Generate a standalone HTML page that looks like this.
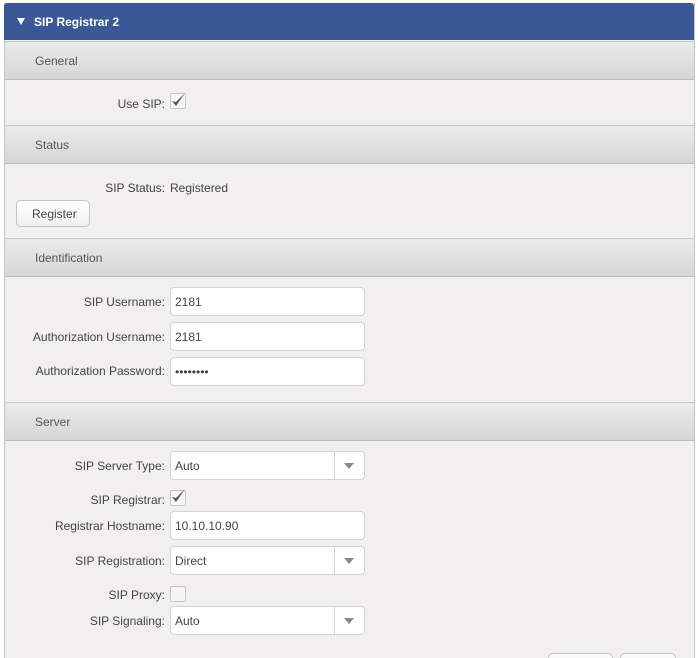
<!DOCTYPE html>
<html><head><style>
html,body{margin:0;}
body{background:#fff;font-family:"Liberation Sans",sans-serif;font-size:12px;color:#444;}
#w{position:relative;width:698px;height:658px;overflow:hidden;}
#p{position:absolute;left:4px;top:3px;width:689px;height:655px;background:#f1efef;border-left:1px solid #c4c4c4;border-right:1px solid #c4c4c4;}
.hd{position:absolute;left:4px;top:3px;width:690px;height:37px;background:#3b5896;color:#fff;font-weight:bold;font-size:12px;border-radius:3px 3px 0 0;}
.bar{position:absolute;left:5px;width:689px;height:37px;background:linear-gradient(#ebebeb,#d6d6d6);border-top:1px solid #c8c8c8;border-bottom:1px solid #bcbcbc;color:#555;font-size:12px;}
.bar span{position:absolute;left:30px;top:12px;}
.l{position:absolute;right:533px;text-align:right;white-space:nowrap;}
.in{position:absolute;left:170px;width:193px;height:27px;background:#fff;border:1px solid #d3d3d3;border-radius:4px;}
.in span{position:absolute;left:4px;top:7px;color:#444;}
.dd{position:absolute;right:0;top:0;width:29px;height:27px;border-left:1px solid #d3d3d3;}
.dd:after{content:"";position:absolute;left:9px;top:11px;border-left:5px solid transparent;border-right:5px solid transparent;border-top:6px solid #888;}
.cb{position:absolute;left:170px;width:14px;height:14px;border:1px solid #c6c6c6;border-radius:2px;background:#f5f5f5;}
.btn{position:absolute;border:1px solid #c4c4c4;border-radius:5px;background:linear-gradient(#fff,#f0f0f0);}
.bb{position:absolute;top:653px;height:5px;border:1px solid #c4c4c4;border-bottom:none;border-radius:5px 5px 0 0;background:#fafafa;}
</style></head><body><div id="w">
<div id="p"></div>
<div class="hd"><span style="position:absolute;left:13px;top:15px;border-left:4px solid transparent;border-right:4px solid transparent;border-top:7px solid #fff;"></span><span style="position:absolute;left:30px;top:12px;">SIP Registrar 2</span></div>
<div class="bar" style="top:41px"><span>General</span></div>
<div class="l" style="top:97px">Use SIP:</div>
<div class="cb" style="top:93px"></div><svg style="position:absolute;left:170px;top:92px" width="17" height="17"><path d="M2 9 L6 14 L15 1 L6 10 Z" fill="#555"/></svg>
<div class="bar" style="top:125px"><span>Status</span></div>
<div class="l" style="top:181px">SIP Status:</div>
<div style="position:absolute;left:170px;top:181px">Registered</div>
<div class="btn" style="left:16px;top:200px;width:72px;height:25px"><span style="position:absolute;left:15px;top:6px">Register</span></div>
<div class="bar" style="top:238px"><span>Identification</span></div>
<div class="l" style="top:295px">SIP Username:</div><div class="in" style="top:287px"><span>2181</span></div>
<div class="l" style="top:330px">Authorization Username:</div><div class="in" style="top:322px"><span>2181</span></div>
<div class="l" style="top:364px">Authorization Password:</div><div class="in" style="top:357px"><span>&bull;&bull;&bull;&bull;&bull;&bull;&bull;&bull;</span></div>
<div class="bar" style="top:402px"><span>Server</span></div>
<div class="l" style="top:459px">SIP Server Type:</div><div class="in" style="top:451px"><span>Auto</span><div class="dd"></div></div>
<div class="l" style="top:493px">SIP Registrar:</div>
<div class="cb" style="top:490px"></div><svg style="position:absolute;left:170px;top:488px" width="17" height="17"><path d="M2 9 L6 14 L15 1 L6 10 Z" fill="#555"/></svg>
<div class="l" style="top:519px">Registrar Hostname:</div><div class="in" style="top:511px"><span>10.10.10.90</span></div>
<div class="l" style="top:554px">SIP Registration:</div><div class="in" style="top:546px"><span>Direct</span><div class="dd"></div></div>
<div class="l" style="top:588px">SIP Proxy:</div><div class="cb" style="top:586px"></div>
<div class="l" style="top:614px">SIP Signaling:</div><div class="in" style="top:606px"><span>Auto</span><div class="dd"></div></div>
<div class="bb" style="left:548px;width:63px"></div>
<div class="bb" style="left:620px;width:54px"></div>
</div></body></html>
